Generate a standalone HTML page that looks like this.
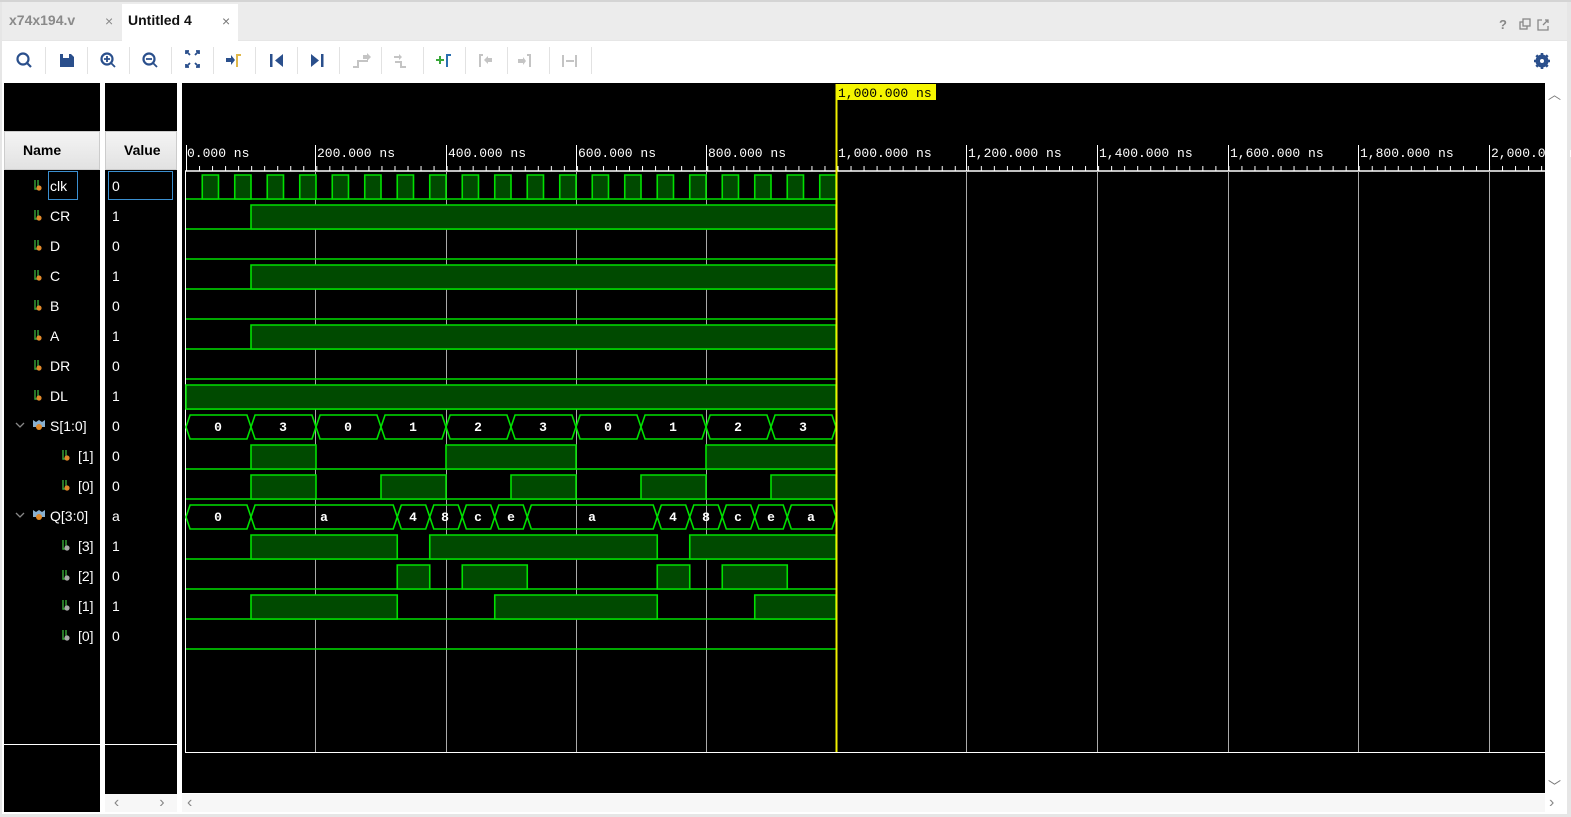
<!DOCTYPE html>
<html><head><meta charset="utf-8"><style>
*{margin:0;padding:0;box-sizing:border-box}
body{width:1571px;height:817px;overflow:hidden;background:#e6e6e6;font-family:"Liberation Sans",sans-serif;position:relative}
.a{position:absolute}
.tab{font-size:14px;top:12px}
.sep{position:absolute;top:47px;width:1px;height:27px;background:#e2e2e2}
.nm{position:absolute;color:#fff;font-size:14px;line-height:16px}
.vl{position:absolute;color:#fff;font-size:14px;left:112px;line-height:16px}
</style></head><body>
<!-- tab bar -->
<div class="a" style="left:0;top:0;width:1571px;height:2px;background:#d4d4d4"></div>
<div class="a" style="left:2px;top:2px;width:1565px;height:38px;background:#ececec"></div>
<div class="a tab" style="left:9px;color:#8a8a8a;font-weight:bold">x74x194.v</div>
<div class="a" style="left:105px;top:13px;color:#888;font-size:14px">×</div>
<div class="a" style="left:122px;top:4px;width:116px;height:37px;background:#fff"></div>
<div class="a tab" style="left:128px;color:#111;font-weight:bold">Untitled 4</div>
<div class="a" style="left:222px;top:13px;color:#777;font-size:14px">×</div>
<div class="a" style="left:1499px;top:17px;color:#888;font-size:13px;font-weight:bold">?</div>
<svg class="a" style="left:1518px;top:18px" width="50" height="14"><rect x="2" y="4" width="7" height="7" fill="none" stroke="#888" stroke-width="1.3"/><rect x="5" y="1" width="7" height="7" fill="#ececec" stroke="#888" stroke-width="1.3"/><path d="M24 2h-4v10h10v-4M25 7l5-5M27 2h3v3" fill="none" stroke="#888" stroke-width="1.3"/></svg>
<!-- toolbar -->
<div class="a" style="left:2px;top:41px;width:1565px;height:40px;background:#fff"></div>
<svg class="a" style="left:0;top:41px" width="620" height="40">
<g fill="none" stroke="#2a4f8c" stroke-width="2.2">
<circle cx="23" cy="18" r="5.5"/><path d="M27 22l4 4"/>
<circle cx="107" cy="18" r="5.5"/><path d="M111 22l4 4M104 18h6M107 15v6" stroke-width="1.8"/>
<circle cx="149" cy="18" r="5.5"/><path d="M153 22l4 4M146 18h6" stroke-width="1.8"/>
<path d="M186 13v-3h3M196 10h3v3M199 23v3h-3M189 26h-3v-3M187 11l3 3M198 11l-3 3M198 25l-3-3M187 25l3-3" stroke-width="1.8"/>
</g>
<path d="M60 13h11l3 3v10h-14z" fill="#2a4f8c"/><rect x="63" y="13" width="6" height="4" fill="#fff"/>
<path d="M226 17h5v-3l4 5-4 5v-3h-5z" fill="#2a4f8c"/><path d="M237 26v-12h4" stroke="#e0b84a" stroke-width="2" fill="none"/>
<rect x="270" y="13" width="2.5" height="13" fill="#2a4f8c"/><path d="M283 13v13l-8-6.5z" fill="#2a4f8c"/>
<rect x="321" y="13" width="2.5" height="13" fill="#2a4f8c"/><path d="M311 13v13l8-6.5z" fill="#2a4f8c"/>
<g stroke="#c4c4c4" stroke-width="2" fill="none"><path d="M353 26h5v-6h10M395 21h6v5h5"/><path d="M480 26v-12h3M530 26v-12h-3M563 14v12M576 14v12M566 20h8"/></g>
<g fill="#c4c4c4"><path d="M363 14h4v-2l4 4-4 4v-2h-4z"/><path d="M394 15h5v-2l3 3-3 3v-2h-5z"/><path d="M492 17h-4v-2l-4 4 4 4v-2h4z"/><path d="M518 18h5v-2l3 4-3 4v-2h-5z"/></g>
<path d="M436 19h8M440 15v8" stroke="#3aa83a" stroke-width="2"/><path d="M447 26v-12h4" stroke="#2a6fb0" stroke-width="2" fill="none"/>
</svg>
<div class="sep" style="left:45px"></div><div class="sep" style="left:87px"></div><div class="sep" style="left:129px"></div><div class="sep" style="left:171px"></div><div class="sep" style="left:213px"></div><div class="sep" style="left:255px"></div><div class="sep" style="left:297px"></div><div class="sep" style="left:339px"></div><div class="sep" style="left:381px"></div><div class="sep" style="left:423px"></div><div class="sep" style="left:465px"></div><div class="sep" style="left:507px"></div><div class="sep" style="left:549px"></div><div class="sep" style="left:591px"></div>
<svg class="a" style="left:1533px;top:52px" width="18" height="18"><circle cx="9" cy="9" r="5" fill="none" stroke="#2a4f8c" stroke-width="3"/><g stroke="#2a4f8c" stroke-width="2.6"><path d="M9 1v16M1 9h16M3.3 3.3l11.4 11.4M14.7 3.3L3.3 14.7"/></g><circle cx="9" cy="9" r="2" fill="#fff"/></svg>
<!-- panels -->
<div class="a" style="left:2px;top:81px;width:1565px;height:733px;background:#fff"></div>
<div class="a" style="left:4px;top:83px;width:96px;height:729px;background:#000"></div>
<div class="a" style="left:105px;top:83px;width:72px;height:711px;background:#000"></div>
<div class="a" style="left:4px;top:131px;width:96px;height:39px;background:linear-gradient(#f4f4f4,#e2e2e2);border:1px solid #ccc;font-weight:bold;font-size:14px;padding:10px 0 0 18px">Name</div>
<div class="a" style="left:105px;top:131px;width:72px;height:39px;background:linear-gradient(#f4f4f4,#e2e2e2);border:1px solid #ccc;font-weight:bold;font-size:14px;padding:10px 0 0 18px">Value</div>
<div class="a" style="left:4px;top:744px;width:96px;height:1px;background:#fff"></div>
<div class="a" style="left:105px;top:744px;width:72px;height:1px;background:#fff"></div>
<div class="a" style="left:105px;top:794px;width:72px;height:18px;background:#f7f7f7;color:#888;font-size:16px;line-height:18px">&nbsp;&nbsp;‹&nbsp;&nbsp;&nbsp;&nbsp;&nbsp;&nbsp;&nbsp;&nbsp;&nbsp;›</div>
<div class="a" style="left:182px;top:83px;width:1363px;height:710px;background:#000"></div>
<div class="a" style="left:182px;top:794px;width:1363px;height:18px;background:#f7f7f7;color:#888;font-size:16px;line-height:18px;padding-left:5px">‹</div>
<div class="a" style="left:1545px;top:83px;width:20px;height:729px;background:#fff;color:#888;font-size:12px"></div>
<div class="a" style="left:1548px;top:84px;color:#777;font-size:13px">︿</div>
<div class="a" style="left:1548px;top:776px;color:#777;font-size:13px">﹀</div>
<div class="a" style="left:1549px;top:794px;color:#888;font-size:16px">›</div>
<!-- names -->
<svg class="a" style="left:0;top:0" width="180" height="660">
<defs><g id="ic"><path d="M0 0v9h2M3 0v9" stroke="#3aa83a" stroke-width="1.4" fill="none"/><circle cx="4" cy="8" r="2.6" fill="#e0892a"/></g>
<g id="icg"><path d="M0 0v9h2M3 0v9" stroke="#3aa83a" stroke-width="1.4" fill="none"/><circle cx="4" cy="8" r="2.6" fill="#aaa"/></g>
<g id="bus"><path d="M0 1l3 2 3-2 3 2 3-2v7h-12z" fill="#8ab0d0"/><circle cx="6" cy="8" r="3" fill="#e0892a"/></g></defs>
<use href="#ic" x="35" y="180"/><use href="#ic" x="35" y="210"/><use href="#ic" x="35" y="240"/><use href="#ic" x="35" y="270"/><use href="#ic" x="35" y="300"/><use href="#ic" x="35" y="330"/><use href="#ic" x="35" y="360"/><use href="#ic" x="35" y="390"/>
<use href="#bus" x="33" y="419"/><use href="#ic" x="63" y="450"/><use href="#ic" x="63" y="480"/>
<use href="#bus" x="33" y="509"/><use href="#icg" x="63" y="540"/><use href="#icg" x="63" y="570"/><use href="#icg" x="63" y="600"/><use href="#icg" x="63" y="630"/>
<path d="M16 423l4 4 4-4M16 513l4 4 4-4" stroke="#888" stroke-width="1.3" fill="none"/>
<rect x="48.5" y="171.5" width="29" height="28" fill="none" stroke="#3b8fd0"/>
<rect x="108.5" y="171.5" width="64" height="28" fill="none" stroke="#3b8fd0"/>
</svg>
<div class="nm" style="left:50px;top:178px">clk</div><div class="nm" style="left:50px;top:208px">CR</div><div class="nm" style="left:50px;top:238px">D</div><div class="nm" style="left:50px;top:268px">C</div><div class="nm" style="left:50px;top:298px">B</div><div class="nm" style="left:50px;top:328px">A</div><div class="nm" style="left:50px;top:358px">DR</div><div class="nm" style="left:50px;top:388px">DL</div><div class="nm" style="left:50px;top:418px">S[1:0]</div><div class="nm" style="left:78px;top:448px">[1]</div><div class="nm" style="left:78px;top:478px">[0]</div><div class="nm" style="left:50px;top:508px">Q[3:0]</div><div class="nm" style="left:78px;top:538px">[3]</div><div class="nm" style="left:78px;top:568px">[2]</div><div class="nm" style="left:78px;top:598px">[1]</div><div class="nm" style="left:78px;top:628px">[0]</div>
<div class="vl" style="top:178px">0</div><div class="vl" style="top:208px">1</div><div class="vl" style="top:238px">0</div><div class="vl" style="top:268px">1</div><div class="vl" style="top:298px">0</div><div class="vl" style="top:328px">1</div><div class="vl" style="top:358px">0</div><div class="vl" style="top:388px">1</div><div class="vl" style="top:418px">0</div><div class="vl" style="top:448px">0</div><div class="vl" style="top:478px">0</div><div class="vl" style="top:508px">a</div><div class="vl" style="top:538px">1</div><div class="vl" style="top:568px">0</div><div class="vl" style="top:598px">1</div><div class="vl" style="top:628px">0</div>
<!-- waveform -->
<svg class="a" style="left:0;top:0" width="1571" height="817">
<defs><pattern id="tk" x="186" y="166" width="13.03" height="5" patternUnits="userSpaceOnUse"><rect x="0" y="0" width="1" height="5" fill="#fff"/></pattern></defs>
<rect x="186" y="166" width="1358" height="5" fill="url(#tk)"/>
<path d="M185 171H1545" stroke="#fff" stroke-width="1.5"/>
<g stroke="#fff" stroke-width="1"><path d="M186.5 145v26M315.5 145v26M446.5 145v26M576.5 145v26M706.5 145v26M966.5 145v26M1097.5 145v26M1228.5 145v26M1358.5 145v26M1489.5 145v26"/></g>
<g stroke="#aaa" stroke-width="1"><path d="M315.5 171V752M446.5 171V752M576.5 171V752M706.5 171V752M966.5 171V752M1097.5 171V752M1228.5 171V752M1358.5 171V752M1489.5 171V752"/></g>
<path d="M185.5 171V752.5H1545" stroke="#fff" fill="none"/>
<g font-family="Liberation Mono,monospace" font-size="13" fill="#fff">
<text x="187" y="157">0.000 ns</text><text x="317" y="157">200.000 ns</text><text x="448" y="157">400.000 ns</text><text x="578" y="157">600.000 ns</text><text x="708" y="157">800.000 ns</text><text x="838" y="157">1,000.000 ns</text><text x="968" y="157">1,200.000 ns</text><text x="1099" y="157">1,400.000 ns</text><text x="1230" y="157">1,600.000 ns</text><text x="1360" y="157">1,800.000 ns</text><text x="1491" y="157">2,000.000 ns</text>
</g>
<g transform="translate(186,0) scale(16.25,1)" fill="#004a00" stroke="#00e000" stroke-width="1.6">
<g vector-effect="non-scaling-stroke">
<path vector-effect="non-scaling-stroke" fill="none" d="M0 199H40M0 229H40M0 259H40M0 289H40M0 319H40M0 349H40M0 379H40M0 409H40M0 469H40M0 499H40M0 559H40M0 589H40M0 619H40M0 649H40"/>
<path vector-effect="non-scaling-stroke" d="M1 199V175H2V199ZM3 199V175H4V199ZM5 199V175H6V199ZM7 199V175H8V199ZM9 199V175H10V199ZM11 199V175H12V199ZM13 199V175H14V199ZM15 199V175H16V199ZM17 199V175H18V199ZM19 199V175H20V199ZM21 199V175H22V199ZM23 199V175H24V199ZM25 199V175H26V199ZM27 199V175H28V199ZM29 199V175H30V199ZM31 199V175H32V199ZM33 199V175H34V199ZM35 199V175H36V199ZM37 199V175H38V199ZM39 199V175H40V199Z"/>
<path vector-effect="non-scaling-stroke" d="M4 229V205H40V229ZM4 289V265H40V289ZM4 349V325H40V349ZM0 409V385H40V409Z"/>
<path vector-effect="non-scaling-stroke" d="M4 469V445H8V469ZM16 469V445H24V469ZM32 469V445H40V469Z"/>
<path vector-effect="non-scaling-stroke" d="M4 499V475H8V499ZM12 499V475H16V499ZM20 499V475H24V499ZM28 499V475H32V499ZM36 499V475H40V499Z"/>
<path vector-effect="non-scaling-stroke" d="M4 559V535H13V559ZM15 559V535H29V559ZM31 559V535H40V559Z"/>
<path vector-effect="non-scaling-stroke" d="M13 589V565H15V589ZM17 589V565H21V589ZM29 589V565H31V589ZM33 589V565H37V589Z"/>
<path vector-effect="non-scaling-stroke" d="M4 619V595H13V619ZM19 619V595H29V619ZM35 619V595H40V619Z"/>
<path vector-effect="non-scaling-stroke" fill="none" d="M0 427L.25 415H3.75L4 427L3.75 439H.25ZM4 427L4.25 415H7.75L8 427L7.75 439H4.25ZM8 427L8.25 415H11.75L12 427L11.75 439H8.25ZM12 427L12.25 415H15.75L16 427L15.75 439H12.25ZM16 427L16.25 415H19.75L20 427L19.75 439H16.25ZM20 427L20.25 415H23.75L24 427L23.75 439H20.25ZM24 427L24.25 415H27.75L28 427L27.75 439H24.25ZM28 427L28.25 415H31.75L32 427L31.75 439H28.25ZM32 427L32.25 415H35.75L36 427L35.75 439H32.25ZM36 427L36.25 415H39.75L40 427L39.75 439H36.25Z"/>
<path vector-effect="non-scaling-stroke" fill="none" d="M0 517L.25 505H3.75L4 517L3.75 529H.25ZM4 517L4.25 505H12.75L13 517L12.75 529H4.25ZM13 517L13.25 505H14.75L15 517L14.75 529H13.25ZM15 517L15.25 505H16.75L17 517L16.75 529H15.25ZM17 517L17.25 505H18.75L19 517L18.75 529H17.25ZM19 517L19.25 505H20.75L21 517L20.75 529H19.25ZM21 517L21.25 505H28.75L29 517L28.75 529H21.25ZM29 517L29.25 505H30.75L31 517L30.75 529H29.25ZM31 517L31.25 505H32.75L33 517L32.75 529H31.25ZM33 517L33.25 505H34.75L35 517L34.75 529H33.25ZM35 517L35.25 505H36.75L37 517L36.75 529H35.25ZM37 517L37.25 505H39.75L40 517L39.75 529H37.25Z"/>
</g></g>
<g font-family="Liberation Mono,monospace" font-size="13" font-weight="bold" fill="#fff" text-anchor="middle">
<text x="218" y="431">0</text><text x="283" y="431">3</text><text x="348" y="431">0</text><text x="413" y="431">1</text><text x="478" y="431">2</text><text x="543" y="431">3</text><text x="608" y="431">0</text><text x="673" y="431">1</text><text x="738" y="431">2</text><text x="803" y="431">3</text>
<text x="218" y="521">0</text><text x="324" y="521">a</text><text x="413" y="521">4</text><text x="445" y="521">8</text><text x="478" y="521">c</text><text x="511" y="521">e</text><text x="592" y="521">a</text><text x="673" y="521">4</text><text x="706" y="521">8</text><text x="738" y="521">c</text><text x="771" y="521">e</text><text x="811" y="521">a</text>
</g>
<path d="M836.5 84V752" stroke="#f0f000" stroke-width="2"/>
<rect x="836" y="84" width="100" height="16" fill="#f5f500"/>
<text x="838" y="97" font-family="Liberation Mono,monospace" font-size="13" fill="#000">1,000.000 ns</text>
</svg>
</body></html>
